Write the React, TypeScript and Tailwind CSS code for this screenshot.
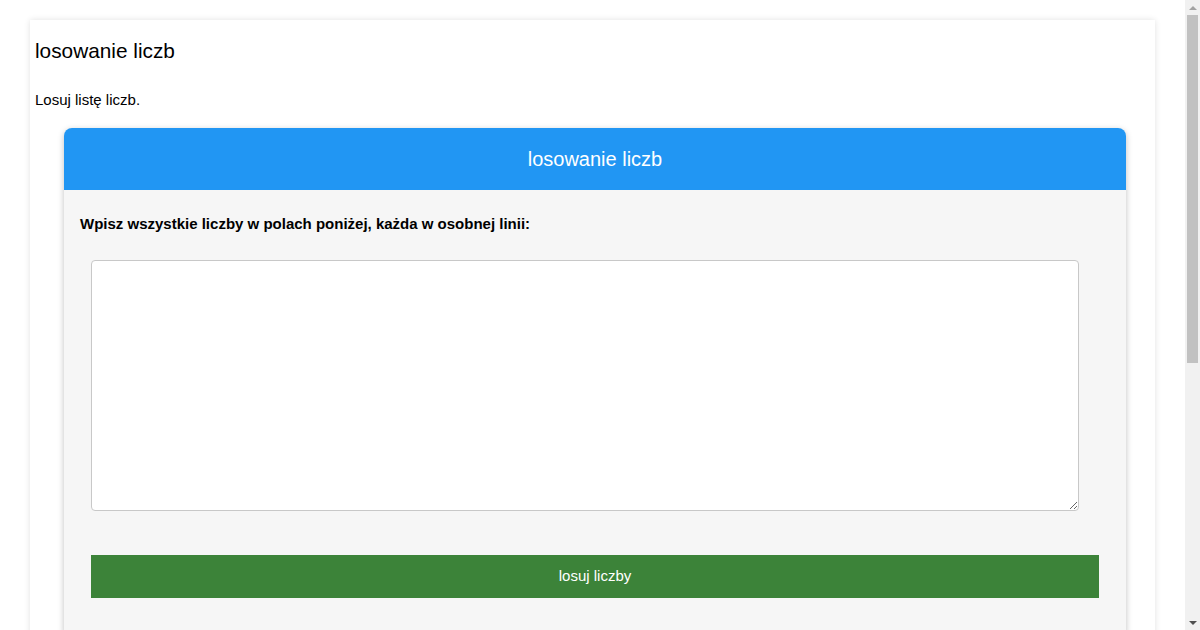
export default function App() {
  return (
    <div className="flex h-[630px] overflow-hidden bg-white font-['Liberation_Sans',Arial,sans-serif] text-black">
      <div className="flex-1 pt-5 px-[30px]">
        <div className="bg-white px-[5px] pb-10 shadow-[0_0_6px_rgba(0,0,0,0.12)]">
          <h1 className="pt-[19px] text-[20.8px] leading-[24px]">losowanie liczb</h1>
          <p className="mt-[28px] text-[15px] leading-[18px]">Losuj listę liczb.</p>
          <div className="ml-[29px] mr-6 mt-[19px] overflow-hidden rounded-lg bg-[#f6f6f6] shadow-[0_2px_6px_rgba(0,0,0,0.25)]">
            <div className="flex h-[62px] items-center justify-center bg-[#2196f3] text-[20px] text-white">
              losowanie liczb
            </div>
            <div className="px-4 pb-10 pt-[25px]">
              <p className="text-[15px] font-bold leading-[18px]">
                Wpisz wszystkie liczby w polach poniżej, każda w osobnej linii:
              </p>
              <textarea className="mt-[27px] ml-[11px] block h-[251px] w-[988px] rounded border border-[#c8c8c8] bg-white" />
              <button className="mt-11 ml-[11px] block h-[43px] w-[1008px] bg-[#3c8339] text-[15px] text-white">
                losuj liczby
              </button>
            </div>
          </div>
        </div>
      </div>
      <div className="flex w-[15px] shrink-0 flex-col items-center bg-[#f1f1f1]">
        <div className="flex h-[15px] items-center justify-center">
          <div className="h-0 w-0 border-x-[4px] border-b-[4px] border-x-transparent border-b-[#a3a3a3]" />
        </div>
        <div className="h-[348px] w-[11px] bg-[#c1c1c1]" />
        <div className="flex-1" />
        <div className="flex h-[15px] items-center justify-center">
          <div className="h-0 w-0 border-x-[4px] border-t-[4px] border-x-transparent border-t-[#505050]" />
        </div>
      </div>
    </div>
  );
}
